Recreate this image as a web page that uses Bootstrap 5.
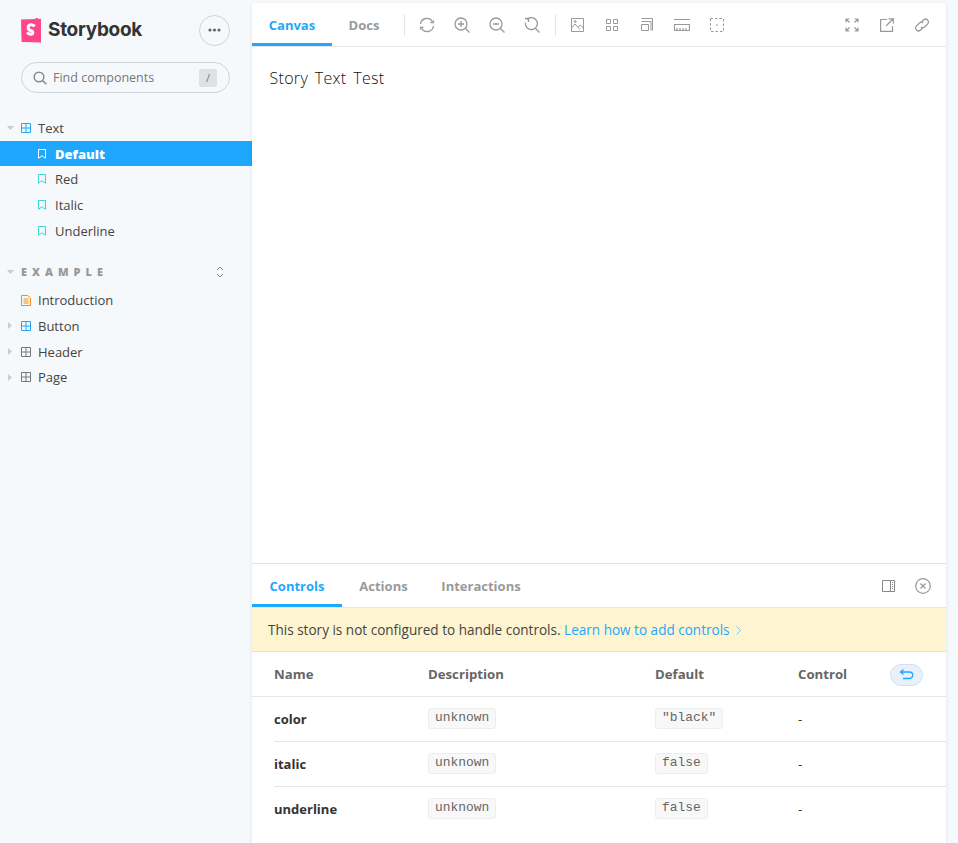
<!DOCTYPE html>
<html lang="en">
<head>
<meta charset="utf-8">
<title>Storybook</title>
<link href="https://cdn.jsdelivr.net/npm/bootstrap@5.3.0/dist/css/bootstrap.min.css" rel="stylesheet">
<style>
html,body{height:843px;overflow:hidden}
body{background:#f6f9fc;font-family:"Open Sans","Noto Sans",sans-serif;color:#333;font-size:13px}
.sb-shell{height:843px}
.sb-side{width:252px;flex:none;padding-top:14px}
.sb-brand{padding:0 22px 0 21px;height:32px}
.sb-word{font-family:"Inter","Open Sans",sans-serif;font-weight:700;font-size:19px;color:#333;letter-spacing:-.3px;margin-left:7px}
.sb-more{width:31px;height:31px;border:1px solid #cfd3d7;border-radius:50%;background:transparent;padding:0}
.sb-search{margin:16px 22px 0 21px;height:31px;border:1px solid #cfd3d7;border-radius:16px;padding:0 12px 0 11px;color:#777}
.sb-search .sb-ph{margin-left:6px;flex:1;font-size:12.500px;padding-top:1px}
.sb-key{width:18px;height:18px;background:#dfe1e3;border-radius:2px;font-size:11px;color:#777;text-align:center;line-height:18px}
.sb-tree{margin-top:22px}
.sb-row{height:25.700px;padding-left:21px;color:#444}
.sb-row>span:last-child{padding-top:1.500px}
.sb-row svg.sb-ic{margin-right:7px;flex:none}
.sb-row .sb-car{width:21px;margin-left:-21px;flex:none;display:flex;justify-content:center;padding:0 2px 0 1px}
.sb-leaf{padding-left:38px}
.sb-leaf svg.sb-ic{margin-right:9px}
.sb-active{background:#1ea7fd;color:#fff;font-weight:800}
.sb-head{margin-top:16px;height:26px;padding-right:28px;margin-bottom:2px}
.sb-title{font-weight:900;font-size:11px;letter-spacing:5px;color:#999}
.sb-main{width:694px;flex:none;margin-top:3px;background:#fff;border-top-right-radius:4px;box-shadow:0 1px 4px rgba(0,0,0,.08)}
.sb-bar{height:44px;border-bottom:1px solid #e4e6e8;flex:none}
.sb-tab{height:43px;font-weight:700;color:#999;display:flex;align-items:center;justify-content:center;padding-top:2px}
.sb-on{color:#1ea7fd;border-bottom:3px solid #1ea7fd;padding-top:6px}
.sb-t1{width:80px}.sb-t2{width:64px}
.sb-div{width:1px;height:22px;background:#e3e5e7;flex:none}
.sb-tool{width:35px;display:flex;justify-content:center;flex:none}
.sb-tools{padding-right:6.500px}
.sb-d1{margin:0 4px 0 8px}
.sb-d2{margin:0 3.500px 0 6px}
.sb-canvas{flex:1;border-bottom:1px solid #dfe1e3;padding:19px 17.500px;font-size:16px;font-weight:300;line-height:24px;color:#111;word-spacing:2.300px;letter-spacing:.3px}
.sb-tabs{height:44px;border-bottom:1px solid #e4e6e8;flex:none}
.sb-c1{width:90px}.sb-c2{width:83px}.sb-c3{width:112px}
.sb-paneltools{padding-right:15px;gap:20px}
.sb-warn{height:44px;background:#fef4cf;border-bottom:1px solid #ebe2bf;padding-left:16px;color:#444;flex:none;font-size:13.550px;padding-top:1px}
.sb-warn a{color:#1ea7fd;text-decoration:none;margin-left:3.500px}
.sb-warn svg{margin-left:6px}
.sb-tbl{display:grid;grid-template-columns:154px 227px 143px 1fr;padding-left:22px}
.sb-cell{height:45px;border-bottom:1px solid #e4e6e8;display:flex;align-items:center;margin-left:-22px;padding-left:22px;padding-top:1px}
.sb-cell+.sb-cell{margin-left:0;padding-left:0}
.sb-end{border-bottom:0}
.sb-hd{font-weight:700;color:#666;font-size:13.200px}
.sb-nm{font-weight:700;color:#333}
.sb-code{font-family:"Liberation Mono",monospace;font-size:12.900px;background:#f8f8f8;border:1px solid #eee;border-radius:3px;padding:0 6px;height:21px;line-height:17px;color:#666;margin-top:-3px}
.sb-undo{width:33px;height:22px;border-radius:11px;background:#e8f1fa;border:1px solid #d3e1ee;margin-left:43px;padding:0;display:flex;align-items:center;justify-content:center}
.sb-foot{height:11px;flex:none}
</style>
</head>
<body>
<div class="sb-shell d-flex">
  <aside class="sb-side">
    <div class="sb-brand d-flex align-items-center justify-content-between">
      <div class="d-flex align-items-center">
        <svg width="20" height="25" viewBox="0 0 20 25"><path d="M0 1.500 14.500 1l.2-1H17l.1 1L20 .8V24.500L.6 24z" fill="#ff4785"/><path d="M13.500 8.500c-.6-1.200-1.800-1.800-3.300-1.700-3.800.3-4 4.800-.6 5.700 3 .8 2.700 3.700.1 3.800-1.500 0-2.700-.7-3.400-2" fill="none" stroke="#fff" stroke-width="3"/></svg>
        <span class="sb-word">Storybook</span>
      </div>
      <button class="sb-more d-flex align-items-center justify-content-center" aria-label="Menu"><svg width="13" height="4" viewBox="0 0 13 4"><circle cx="2" cy="2" r="1.600" fill="#666"/><circle cx="6.500" cy="2" r="1.600" fill="#666"/><circle cx="11" cy="2" r="1.600" fill="#666"/></svg></button>
    </div>
    <div class="sb-search d-flex align-items-center">
      <svg width="14" height="14" viewBox="0 0 14 14" fill="none" stroke="#888" stroke-width="1.500"><circle cx="6" cy="6" r="4.800"/><path d="m9.500 9.500 3.800 3.800"/></svg>
      <span class="sb-ph">Find components</span><span class="sb-key">/</span>
    </div>
    <div class="sb-tree">
      <div class="sb-row d-flex align-items-center">
        <span class="sb-car"><svg width="7" height="4" viewBox="0 0 7 4"><path d="M0 0h7L3.500 4z" fill="#ccc"/></svg></span>
        <svg class="sb-ic" width="10" height="10" viewBox="0 0 10 10" fill="none" stroke="#1ea7fd"><path d="M.5.500h9v9h-9zM5 .5v9M.5 5h9"/></svg><span>Text</span>
      </div>
      <div class="sb-row sb-leaf sb-active d-flex align-items-center">
        <svg class="sb-ic" width="8" height="10" viewBox="0 0 8 10" fill="none" stroke="#fff"><path d="M.5.500h7v8.700L4 6.800.5 9.200z"/></svg><span>Default</span>
      </div>
      <div class="sb-row sb-leaf d-flex align-items-center"><svg class="sb-ic" width="8" height="10" viewBox="0 0 8 10" fill="none" stroke="#37d5d3"><path d="M.5.500h7v8.700L4 6.800.5 9.200z"/></svg><span>Red</span></div>
      <div class="sb-row sb-leaf d-flex align-items-center"><svg class="sb-ic" width="8" height="10" viewBox="0 0 8 10" fill="none" stroke="#37d5d3"><path d="M.5.500h7v8.700L4 6.800.5 9.200z"/></svg><span>Italic</span></div>
      <div class="sb-row sb-leaf d-flex align-items-center"><svg class="sb-ic" width="8" height="10" viewBox="0 0 8 10" fill="none" stroke="#37d5d3"><path d="M.5.500h7v8.700L4 6.800.5 9.200z"/></svg><span>Underline</span></div>
      <div class="sb-row sb-head d-flex align-items-center justify-content-between">
        <div class="d-flex align-items-center">
          <span class="sb-car"><svg width="7" height="4" viewBox="0 0 7 4"><path d="M0 0h7L3.500 4z" fill="#ccc"/></svg></span>
          <span class="sb-title">EXAMPLE</span>
        </div>
        <svg width="8" height="12" viewBox="0 0 8 12" fill="none" stroke="#888"><path d="m1 4 3-3 3 3M1 8l3 3 3-3"/></svg>
      </div>
      <div class="sb-row d-flex align-items-center">
        <svg class="sb-ic" width="10" height="11" viewBox="0 0 10 11" fill="none" stroke="#f48c16"><path d="M.5.500h6l3 2.500v7.500h-9zM2.500 4h5M2.500 6h5M2.500 8h5"/></svg><span>Introduction</span>
      </div>
      <div class="sb-row d-flex align-items-center"><span class="sb-car"><svg width="4" height="7" viewBox="0 0 4 7"><path d="M0 0v7l4-3.500z" fill="#ccc"/></svg></span><svg class="sb-ic" width="10" height="10" viewBox="0 0 10 10" fill="none" stroke="#1ea7fd"><path d="M.5.500h9v9h-9zM5 .5v9M.5 5h9"/></svg><span>Button</span></div>
      <div class="sb-row d-flex align-items-center"><span class="sb-car"><svg width="4" height="7" viewBox="0 0 4 7"><path d="M0 0v7l4-3.500z" fill="#ccc"/></svg></span><svg class="sb-ic" width="10" height="10" viewBox="0 0 10 10" fill="none" stroke="#777"><path d="M.5.500h9v9h-9zM5 .5v9M.5 5h9"/></svg><span>Header</span></div>
      <div class="sb-row d-flex align-items-center"><span class="sb-car"><svg width="4" height="7" viewBox="0 0 4 7"><path d="M0 0v7l4-3.500z" fill="#ccc"/></svg></span><svg class="sb-ic" width="10" height="10" viewBox="0 0 10 10" fill="none" stroke="#777"><path d="M.5.500h9v9h-9zM5 .5v9M.5 5h9"/></svg><span>Page</span></div>
    </div>
  </aside>
  <main class="sb-main d-flex flex-column">
    <div class="sb-bar d-flex align-items-start">
      <div class="sb-tab sb-t1 sb-on">Canvas</div>
      <div class="sb-tab sb-t2">Docs</div>
      <div class="sb-tools d-flex align-items-center flex-grow-1 h-100">
        <span class="sb-div sb-d1"></span>
        <span class="sb-tool"><svg width="16" height="16" viewBox="0 0 16 16" fill="none" stroke="#999" stroke-width="1.300"><path d="M1.500 7A6.500 6.500 0 0 1 13.500 4.500M14.500 9A6.500 6.500 0 0 1 2.500 11.500"/><path d="m11.500 5.500 3 0v-2M4.500 10.500h-3v2"/></svg></span>
        <span class="sb-tool"><svg width="16" height="16" viewBox="0 0 16 16" fill="none" stroke="#999" stroke-width="1.300"><circle cx="7" cy="7" r="6"/><path d="m11.500 11.500 4 4M7 4v6M4 7h6"/></svg></span>
        <span class="sb-tool"><svg width="16" height="16" viewBox="0 0 16 16" fill="none" stroke="#999" stroke-width="1.300"><circle cx="7" cy="7" r="6"/><path d="m11.500 11.500 4 4M4 7h6"/></svg></span>
        <span class="sb-tool"><svg width="16" height="16" viewBox="0 0 16 16" fill="none" stroke="#999" stroke-width="1.300"><path d="M3 2.500A6 6 0 1 1 1.500 5.500"/><path d="m11.500 11.500 4 4M1 1.500h3.500V5"/></svg></span>
        <span class="sb-div sb-d2"></span>
        <span class="sb-tool"><svg width="13" height="14" viewBox="0 0 13 14" fill="none" stroke="#999"><path d="M.5.500h12v13H.5zM.5 10l3.500-4 5 5.500M7 9l2.500-2 3 3.500"/><circle cx="4" cy="3.500" r="1"/></svg></span>
        <span class="sb-tool"><svg width="12" height="12" viewBox="0 0 12 12" fill="none" stroke="#999"><path d="M.5.500h4v4h-4zM7.500.5h4v4h-4zM.5 7.500h4v4h-4zM7.500 7.500h4v4h-4z"/></svg></span>
        <span class="sb-tool"><svg width="12" height="13" viewBox="0 0 12 13" fill="none" stroke="#999"><path d="M.5 6.500h7v6h-7zM.5 3.500h9.500v9M.5.500h11v12"/></svg></span>
        <span class="sb-tool"><svg width="16" height="14" viewBox="0 0 16 14" fill="none" stroke="#999" stroke-width="1.200"><path d="M.5 6.500h15v6H.5zM0 1.500h16M3 10v2.500M6 10v2.500M9 10v2.500M12 10v2.500"/></svg></span>
        <span class="sb-tool"><svg width="14" height="14" viewBox="0 0 14 14" fill="none" stroke="#999"><path d="M.5.500h13v13H.5z" stroke-dasharray="2.500 2"/><path d="M6 7h2"/></svg></span>
        <span class="flex-grow-1"></span>
        <span class="sb-tool"><svg width="14" height="14" viewBox="0 0 14 14" fill="none" stroke="#999" stroke-width="1.200"><path d="M1 4.500V1h3.500M1 1l3.500 3.500M13 4.500V1H9.500M13 1 9.500 4.500M1 9.500V13h3.500M1 13l3.500-3.500M13 9.500V13H9.500M13 13 9.500 9.500"/></svg></span>
        <span class="sb-tool"><svg width="14" height="14" viewBox="0 0 14 14" fill="none" stroke="#999" stroke-width="1.200"><path d="M7 1.500H.6v11.900h11.900V8M6 8l7-7M8.500.8h4.800v4.600"/></svg></span>
        <span class="sb-tool"><svg width="14" height="14" viewBox="0 0 14 14" fill="none" stroke="#999" stroke-width="1.200"><path d="M6 4.500 8.500 2a2.800 2.800 0 0 1 4 4L9.500 9a2.500 2.500 0 0 1-3.500 0"/><path d="M8 9.500 5.500 12a2.800 2.800 0 0 1-4-4l3-3a2.500 2.500 0 0 1 3.500 0"/></svg></span>
      </div>
    </div>
    <div class="sb-canvas">Story Text Test</div>
    <div class="sb-tabs d-flex align-items-start">
      <div class="sb-tab sb-c1 sb-on">Controls</div>
      <div class="sb-tab sb-c2">Actions</div>
      <div class="sb-tab sb-c3">Interactions</div>
      <div class="sb-paneltools d-flex align-items-center ms-auto h-100">
        <svg width="13" height="12" viewBox="0 0 13 12" fill="none" stroke="#888"><path d="M.5.500h12v11H.5zM8.500.5v11"/><path d="M10.500 2v8" stroke-dasharray="1 1"/></svg>
        <svg width="16" height="16" viewBox="0 0 16 16" fill="none" stroke="#999" stroke-width="1.200"><circle cx="8" cy="8" r="7.300"/><path d="m5.500 5.500 5 5M10.500 5.500l-5 5"/></svg>
      </div>
    </div>
    <div class="sb-warn d-flex align-items-center">This story is not configured to handle controls. <a href="#">Learn how to add controls</a><svg width="5" height="9" viewBox="0 0 5 9" fill="none" stroke="#7cc8f8"><path d="m.5.500 4 4-4 4"/></svg></div>
    <div class="sb-tbl">
      <div class="sb-cell sb-hd">Name</div><div class="sb-cell sb-hd">Description</div><div class="sb-cell sb-hd">Default</div>
      <div class="sb-cell sb-hd">Control<button class="sb-undo" aria-label="Reset"><svg width="15" height="11" viewBox="0 0 15 11" fill="none" stroke="#1ea7fd" stroke-width="1.300"><path d="M1.500 3h9a3 3 0 0 1 0 6.500H4M4.500.5l-3 2.500 3 2.500"/></svg></button></div>
      <div class="sb-cell sb-nm">color</div><div class="sb-cell"><code class="sb-code">unknown</code></div><div class="sb-cell"><code class="sb-code">"black"</code></div><div class="sb-cell">-</div>
      <div class="sb-cell sb-nm">italic</div><div class="sb-cell"><code class="sb-code">unknown</code></div><div class="sb-cell"><code class="sb-code">false</code></div><div class="sb-cell">-</div>
      <div class="sb-cell sb-nm sb-end">underline</div><div class="sb-cell sb-end"><code class="sb-code">unknown</code></div><div class="sb-cell sb-end"><code class="sb-code">false</code></div><div class="sb-cell sb-end">-</div>
    </div>
    <div class="sb-foot"></div>
  </main>
</div>
<script src="https://cdn.jsdelivr.net/npm/bootstrap@5.3.0/dist/js/bootstrap.bundle.min.js"></script>
</body>
</html>
